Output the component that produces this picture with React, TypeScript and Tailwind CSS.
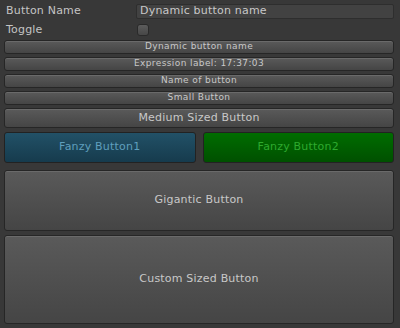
import React from "react";

function Btn({ label, h, small }: { label: string; h: string; small?: boolean }) {
  return (
    <button
      className={`w-full ${h} flex items-center justify-center rounded-[3px] border border-[#262626] bg-gradient-to-b from-[#5a5a5a] to-[#454545] shadow-[inset_0_1px_0_#6a6a6a] ${
        small ? "text-[9px] tracking-[0.4px]" : "text-[11px] tracking-[0.2px]"
      } text-[#c8c8c8]`}
    >
      {label}
    </button>
  );
}

export default function App() {
  return (
    <div
      className="w-[400px] h-[328px] bg-[#383838] overflow-hidden text-[#c4c4c4] pl-[4px] pr-[6px] pt-[3px]"
      style={{ fontFamily: '"DejaVu Sans", sans-serif' }}
    >
      {/* Button Name field */}
      <div className="flex items-center h-[16px]">
        <span className="w-[132px] pl-[2px] text-[11px] tracking-[0.2px]">Button Name</span>
        <div className="flex-1 h-[15px] bg-[#424242] border border-[#2e2e2e] rounded-[2px] flex items-center pl-[3px] text-[11px] tracking-[0.2px] text-[#c8c8c8]">
          Dynamic button name
        </div>
      </div>

      {/* Toggle */}
      <div className="flex items-center h-[16px] mt-[3px]">
        <span className="w-[133px] pl-[2px] text-[11px] tracking-[0.2px]">Toggle</span>
        <div className="w-[12px] h-[12px] rounded-[3px] border border-[#2a2a2a] bg-gradient-to-b from-[#5c5c5c] to-[#474747]" />
      </div>

      <div className="flex flex-col gap-[3px] mt-[2px]">
        <Btn label="Dynamic button name" h="h-[14px]" small />
        <Btn label="Expression label: 17:37:03" h="h-[14px]" small />
        <Btn label="Name of button" h="h-[14px]" small />
        <Btn label="Small Button" h="h-[14px]" small />
        <Btn label="Medium Sized Button" h="h-[20px]" />
      </div>

      <div className="flex gap-[7px] mt-[4px]">
        <button className="flex-1 h-[31px] rounded-[3px] border border-[#222] bg-gradient-to-b from-[#225167] to-[#163b4d] text-[11px] tracking-[0.2px] text-[#5f9fbd]">
          Fanzy Button1
        </button>
        <button className="flex-1 h-[31px] rounded-[3px] border border-[#222] bg-gradient-to-b from-[#006d00] to-[#005000] text-[11px] tracking-[0.2px] text-[#2eaa2e]">
          Fanzy Button2
        </button>
      </div>

      <div className="flex flex-col gap-[4px] mt-[7px]">
        <Btn label="Gigantic Button" h="h-[61px]" />
        <Btn label="Custom Sized Button" h="h-[89px]" />
      </div>
    </div>
  );
}
